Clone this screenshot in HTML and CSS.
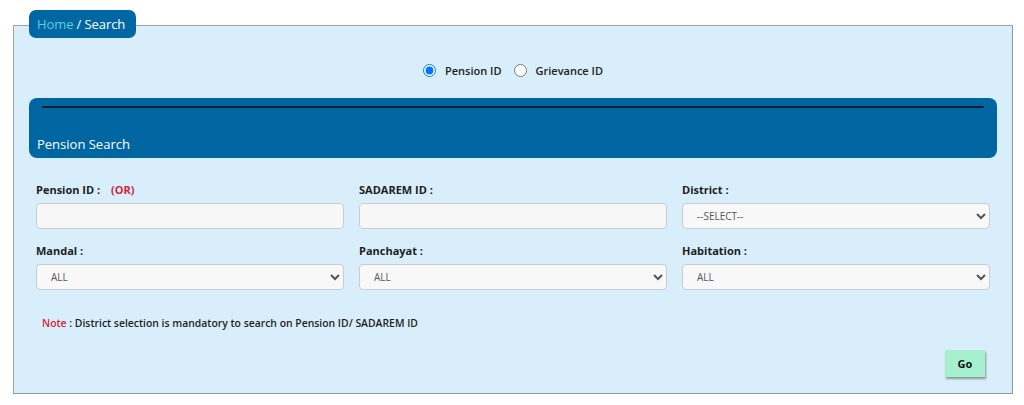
FILE: index.html
```html
<!DOCTYPE html>
<html>
<head>
<meta charset="utf-8">
<link rel="stylesheet" href="styles.css">
</head>
<body>
<div class="page">
  <div class="panel">
    <div class="tab"><span class="home">Home</span> / Search</div>
    <div class="radios">
      <label class="radio"><input type="radio" name="t" checked> Pension ID</label>
      <label class="radio"><input type="radio" name="t"> Grievance ID</label>
    </div>
    <div class="header">
      <div class="rule"></div>
      <div class="title">Pension Search</div>
    </div>
    <div class="form">
      <div class="grid">
        <div class="field">
          <div class="label">Pension ID : <span class="or">(OR)</span></div>
          <input class="ctrl" type="text">
        </div>
        <div class="field">
          <div class="label">SADAREM ID :</div>
          <input class="ctrl" type="text">
        </div>
        <div class="field">
          <div class="label">District :</div>
          <select class="ctrl sel"><option>--SELECT--</option></select>
        </div>
        <div class="field">
          <div class="label">Mandal :</div>
          <select class="ctrl sel"><option>ALL</option></select>
        </div>
        <div class="field">
          <div class="label">Panchayat :</div>
          <select class="ctrl sel"><option>ALL</option></select>
        </div>
        <div class="field">
          <div class="label">Habitation :</div>
          <select class="ctrl sel"><option>ALL</option></select>
        </div>
      </div>
      <div class="note"><span class="note-k">Note</span> : District selection is mandatory to search on Pension ID/ SADAREM ID</div>
      <div class="actions"><button class="go">Go</button></div>
    </div>
  </div>
</div>
</body>
</html>
```
FILE: styles.css
```css
html, body {
  margin: 0;
  background: #ffffff;
  font-family: "Open Sans", "DejaVu Sans", sans-serif;
}
.page {
  padding: 25px 11px 0 13px;
}
.panel {
  box-sizing: border-box;
  height: 369px;
  border: 1px solid #9aa4ad;
  border-right-color: #8f989f;
  border-bottom-color: #8f989f;
  background: #d8eefb;
  padding: 0 15px 15px;
}
.tab {
  display: block;
  width: fit-content;
  box-sizing: border-box;
  margin-top: -16px;
  height: 28px;
  line-height: 28px;
  padding: 0 11px 0 8px;
  background: #0067a3;
  border-radius: 7px;
  color: #ffffff;
  font-size: 13px;
  letter-spacing: -0.1px;
}
.home { color: #5ccfdc; }
.radios {
  margin-top: 22px;
  height: 20px;
  display: flex;
  justify-content: center;
  align-items: center;
  gap: 12px;
  font-size: 11px;
  font-weight: 600;
  color: #222;
}
.radio {
  display: flex;
  align-items: center;
  gap: 9px;
}
.radio input {
  margin: 0;
  width: 13px;
  height: 13px;
}
.header {
  margin-top: 18px;
  height: 60px;
  box-sizing: border-box;
  padding-top: 8px;
  background: #0066a1;
  border-radius: 8px;
}
.rule {
  margin: 0 13px;
  height: 2px;
  background: #0d1f33;
}
.title {
  margin-top: 28px;
  padding-left: 8px;
  line-height: 16px;
  font-size: 13px;
  color: #ffffff;
}
.form {
  padding: 0 7px;
}
.grid {
  margin-top: 25px;
  display: grid;
  grid-template-columns: repeat(3, 308px);
  column-gap: 15px;
  row-gap: 15px;
}
.field {
  display: flex;
  flex-direction: column;
  gap: 6px;
}
.label {
  line-height: 14px;
  font-size: 11px;
  font-weight: 700;
  color: #1e1e1e;
}
.or {
  color: #d0263a;
  margin-left: 8px;
}
.ctrl {
  box-sizing: border-box;
  width: 308px;
  height: 26px;
  margin: 0;
  border: 1px solid #c9cdd0;
  border-radius: 4px;
  background: #f7f7f7;
  font-family: "Open Sans", "DejaVu Sans", sans-serif;
  font-size: 10px;
  color: #555;
  padding: 0 10px;
}
.sel {
  background: #f8f8f8;
}
.note {
  margin-top: 26px;
  padding-left: 6px;
  line-height: 14px;
  font-size: 10.4px;
  font-weight: 600;
  color: #1e1e1e;
}
.note-k { color: #d0263a; }
.actions {
  margin-top: 20px;
  display: flex;
  justify-content: flex-end;
  padding-right: 5px;
}
.go {
  width: 40px;
  height: 27px;
  border: none;
  background: #a7f0cf;
  box-shadow: 1px 2px 2px #8a9a94;
  font-family: "Open Sans", "DejaVu Sans", sans-serif;
  font-size: 11px;
  font-weight: 700;
  color: #111;
  padding: 0;
}
```
